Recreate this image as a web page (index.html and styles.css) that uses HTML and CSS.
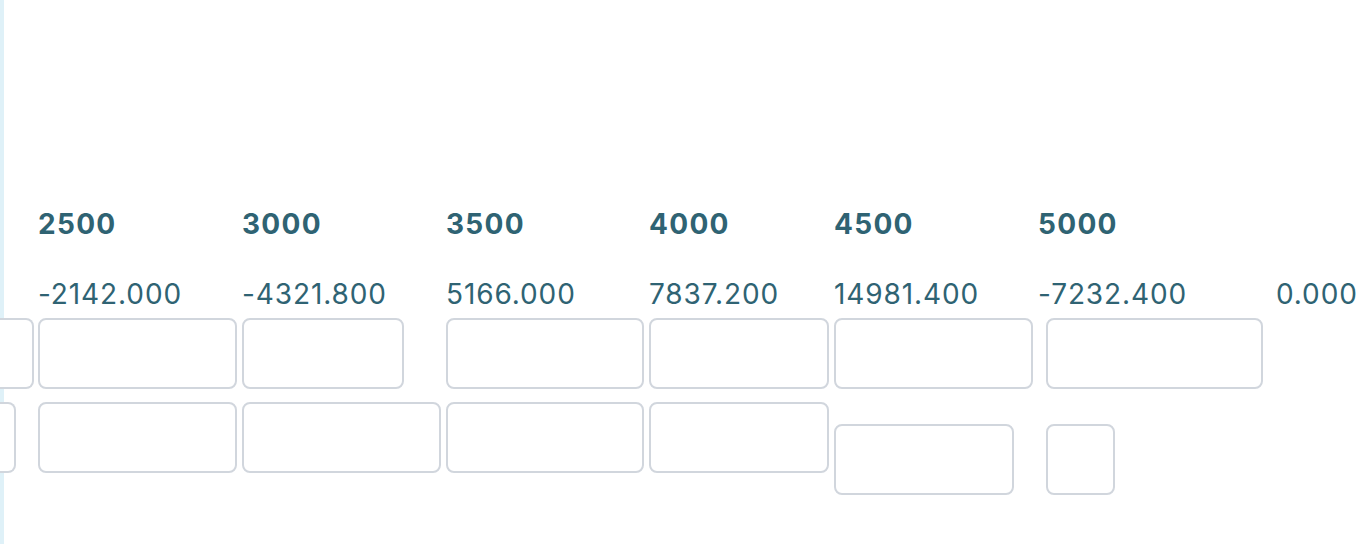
FILE: index.html
```html
<!DOCTYPE html>
<html lang="en">
<head>
  <meta charset="UTF-8">
  <meta name="viewport" content="width=device-width, initial-scale=1.0">
  <title>Ladder</title>
  <link rel="stylesheet" href="styles.css">
</head>
<body>

  <div class="ladder">
    <div class="row head">
      <div class="cell lead"></div>
      <div class="cell c1">2500</div>
      <div class="cell c2">3000</div>
      <div class="cell c3">3500</div>
      <div class="cell c4">4000</div>
      <div class="cell c5">4500</div>
      <div class="cell c6">5000</div>
      <div class="cell c7"></div>
    </div>

    <div class="row values">
      <div class="cell lead"></div>
      <div class="cell c1">-2142.000</div>
      <div class="cell c2">-4321.800</div>
      <div class="cell c3">5166.000</div>
      <div class="cell c4">7837.200</div>
      <div class="cell c5">14981.400</div>
      <div class="cell c6">-7232.400</div>
      <div class="cell c7">0.000</div>
    </div>

    <div class="row inputs first">
      <div class="cell lead"><div class="box cut w34"></div></div>
      <div class="cell c1"><div class="box w199"></div></div>
      <div class="cell c2"><div class="box w162"></div></div>
      <div class="cell c3"><div class="box w198"></div></div>
      <div class="cell c4"><div class="box w180"></div></div>
      <div class="cell c5"><div class="box w199"></div></div>
      <div class="cell c6"><div class="box w217 shift"></div></div>
    </div>

    <div class="row inputs second">
      <div class="cell lead"><div class="box cut w16"></div></div>
      <div class="cell c1"><div class="box w199"></div></div>
      <div class="cell c2"><div class="box w199"></div></div>
      <div class="cell c3"><div class="box w198"></div></div>
      <div class="cell c4"><div class="box w180"></div></div>
      <div class="cell c5"><div class="box w180 low"></div></div>
      <div class="cell c6"><div class="box w69 shift low"></div></div>
    </div>
  </div>

</body>
</html>
```

FILE: styles.css
```css
body {
  font-family: 'Inter', 'Noto Sans', sans-serif;
  background: linear-gradient(to right, #dff1f8 4px, #fff 4px);
  color: #2f6373;
  margin: 0;
  padding: 0;
}

.ladder {
  padding-top: 206px;
}

.row {
  display: flex;
  align-items: flex-start;
}

.cell {
  flex: none;
}

.lead { width: 38px; }
.c1 { width: 204px; }
.c2 { width: 204px; }
.c3 { width: 203px; }
.c4 { width: 185px; }
.c5 { width: 204px; }
.c6 { width: 238px; }
.c7 { width: 92px; }

.head .cell {
  font-size: 28px;
  line-height: 36px;
  font-weight: 700;
  letter-spacing: 1.3px;
}

.values {
  margin-top: 34px;
}

.values .cell {
  font-size: 28px;
  line-height: 36px;
  font-weight: 400;
  letter-spacing: 0.9px;
}

.inputs.first {
  margin-top: 6px;
}

.inputs.second {
  margin-top: 13px;
}

.box {
  box-sizing: border-box;
  height: 71px;
  background: #fff;
  border: 2px solid #d1d6dd;
  border-radius: 8px;
}

.box.cut {
  border-left: 0;
  border-radius: 0 8px 8px 0;
}

.box.shift {
  margin-left: 8px;
}

.box.low {
  margin-top: 22px;
}

.w16 { width: 16px; }
.w34 { width: 34px; }
.w69 { width: 69px; }
.w162 { width: 162px; }
.w180 { width: 180px; }
.w198 { width: 198px; }
.w199 { width: 199px; }
.w217 { width: 217px; }
```
